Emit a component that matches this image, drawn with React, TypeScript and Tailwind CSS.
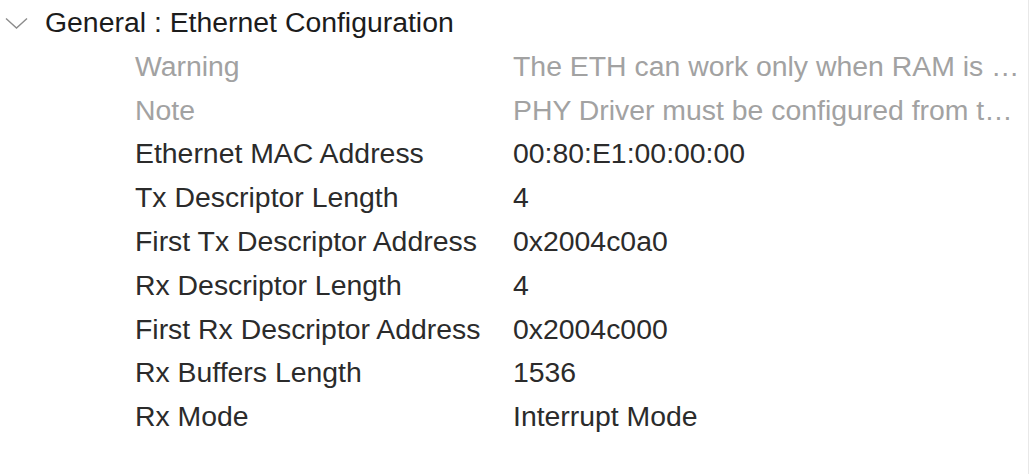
import React from 'react';

type Row = {
  label: string;
  value: string;
  muted?: boolean;
};

// values as the table shows them (long notes are already clipped by the tool)
const rows: Row[] = [
  { label: 'Warning', value: 'The ETH can work only when RAM is \u2026', muted: true },
  { label: 'Note', value: 'PHY Driver must be configured from t\u2026', muted: true },
  { label: 'Ethernet MAC Address', value: '00:80:E1:00:00:00' },
  { label: 'Tx Descriptor Length', value: '4' },
  { label: 'First Tx Descriptor Address', value: '0x2004c0a0' },
  { label: 'Rx Descriptor Length', value: '4' },
  { label: 'First Rx Descriptor Address', value: '0x2004c000' },
  { label: 'Rx Buffers Length', value: '1536' },
  { label: 'Rx Mode', value: 'Interrupt Mode' }
];

const Chevron = () => (
  <svg width="23" height="12" viewBox="0 0 23 12" fill="none" className="shrink-0">
    <path d="M1 1.5 L11.5 11 L22 1.5" stroke="#8c8c8c" strokeWidth="1.4" />
  </svg>
);

export default function App() {
  return (
    <div
      className="w-[1029px] h-[474px] bg-white border-r border-[#e8e8e8] pt-[1px] text-[28.4px] leading-[43.8px] select-none"
      style={{ fontFamily: '"Liberation Sans", Arial, sans-serif' }}
    >
      <div className="flex items-center h-[43.8px] pl-[5px] text-[#1c1c1c]">
        <Chevron />
        <span className="ml-[17px] whitespace-nowrap">General : Ethernet Configuration</span>
      </div>

      <div className="pl-[135px]">
        {rows.map((row) => (
          <div
            key={row.label}
            className={`grid grid-cols-[378px_505px] ${row.muted ? 'text-[#a2a2a2]' : 'text-[#2b2b2b]'}`}
          >
            <span className="whitespace-nowrap">{row.label}</span>
            <span className="whitespace-nowrap">{row.value}</span>
          </div>
        ))}
      </div>
    </div>
  );
}
